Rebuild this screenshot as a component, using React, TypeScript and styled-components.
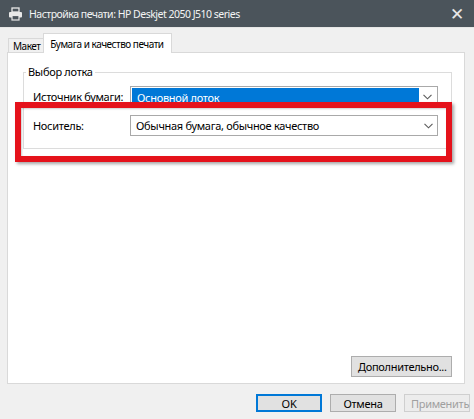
import styled, { createGlobalStyle } from 'styled-components';

const GlobalStyle = createGlobalStyle`
  *, *::before, *::after {
    box-sizing: border-box;
  }
  html, body {
    margin: 0;
    padding: 0;
    background: #f0f0f0;
  }
  body {
    font-family: "Noto Sans", "Liberation Sans", sans-serif;
    font-size: 11px;
    letter-spacing: -0.3px;
    color: #000;
  }
`

const Window = styled.div`
  position: relative;
  width: 474px;
  height: 419px;
  display: flex;
  flex-direction: column;
  background: #f0f0f0;
  overflow: hidden;
`

const TitleBar = styled.div`
  height: 28px;
  flex: none;
  display: flex;
  align-items: center;
  background: #4b545b;
  color: #f4f4f4;
  padding: 0 10px 0 8px;
  border-bottom: 1px solid #e6e6e6;
`

const Title = styled.span`
  flex: 1;
  margin-left: 6px;
  font-size: 10.5px;
  letter-spacing: -0.5px;
`

const Close = styled.span`
  font-size: 17px;
  font-weight: 300;
  line-height: 1;
  color: #e8e8e8;
`

const Body = styled.div`
  padding: 5px 9px 0 7px;
  display: flex;
  flex-direction: column;
`

const Tabs = styled.div`
  display: flex;
  align-items: flex-end;
  height: 19px;
  padding-left: 1px;
`

const Tab = styled.div<{ $active?: boolean }>`
  height: ${p => (p.$active ? '20px' : '14px')};
  display: flex;
  align-items: center;
  padding: ${p => (p.$active ? '0 7px 0 6px' : '0 3px 0 4px')};
  background: ${p => (p.$active ? '#fff' : '#f0f0f0')};
  border: 1px solid #d9d9d9;
  border-bottom: none;
  margin-left: ${p => (p.$active ? '-1px' : '0')};
  margin-bottom: ${p => (p.$active ? '-1px' : '0')};
  position: relative;
  z-index: ${p => (p.$active ? 1 : 0)};
  font-size: 10px;
  letter-spacing: -0.5px;
`

const Panel = styled.div`
  height: 332px;
  background: #fff;
  border: 1px solid #d9d9d9;
  display: flex;
  flex-direction: column;
  padding: 12px 12px 6px 15px;
`

const Group = styled.fieldset`
  margin: 0;
  padding: 7px 13px 12px 9px;
  border: 1px solid #dcdcdc;
  display: flex;
  flex-direction: column;
  gap: 8px;
  min-width: 0;
`

const Legend = styled.legend`
  padding: 0 2px;
  margin-left: -7px;
  line-height: 14px;
`

const Row = styled.div`
  display: flex;
  align-items: center;
`

const Label = styled.span`
  width: 97px;
  flex: none;
`

const Select = styled.div<{ $focused?: boolean }>`
  flex: 1;
  height: 21px;
  display: flex;
  align-items: center;
  border: 1px solid #a9a9a9;
  background: #fff;
  padding: ${p => (p.$focused ? '1px' : '0')};
`

const SelectValue = styled.div<{ $focused?: boolean }>`
  flex: 1;
  height: 100%;
  display: flex;
  align-items: center;
  padding-left: 5px;
  padding-top: ${p => (p.$focused ? '2px' : '0')};
  background: ${p => (p.$focused ? '#0078d7' : 'transparent')};
  color: ${p => (p.$focused ? '#fff' : '#000')};
`

const Arrow = styled.div`
  width: 17px;
  display: flex;
  align-items: center;
  justify-content: center;
  flex: none;
`

const Spacer = styled.div`
  flex: 1;
`

const Button = styled.button<{ $primary?: boolean; $disabled?: boolean }>`
  height: 20px;
  font-family: inherit;
  font-size: 11px;
  letter-spacing: -0.3px;
  padding: 0 6px;
  background: #e1e1e1;
  border: ${p => (p.$primary ? '2px solid #0078d7' : '1px solid #adadad')};
  color: ${p => (p.$disabled ? '#a0a0a0' : '#000')};
  ${p => p.$disabled && 'background: #ececec; border-color: #cfcfcf;'}
`

const AdvancedRow = styled.div`
  display: flex;
  justify-content: flex-end;
`

const Advanced = styled(Button)`
  width: 101px;
  height: 21px;
`

const Footer = styled.div`
  display: flex;
  justify-content: flex-end;
  gap: 8px;
  padding-top: 10px;
  margin-right: -5px;
`

const FooterButton = styled(Button)`
  width: 66px;
  height: 18px;
  line-height: 1;
`

const Highlight = styled.div`
  position: absolute;
  left: 15px;
  top: 102px;
  width: 437px;
  height: 60px;
  border: 6px solid #e5121b;
  box-shadow: 2px 2px 3px rgba(0, 0, 0, 0.35), inset 1px 1px 2px rgba(0, 0, 0, 0.2);
  pointer-events: none;
`

const PrinterIcon = () => (
  <svg width="15" height="14" viewBox="0 0 15 14">
    <rect x="4" y="1" width="7" height="4" fill="none" stroke="#e8e8e8" strokeWidth="1.3" />
    <rect x="1" y="5" width="13" height="5.5" rx="1" fill="#e8e8e8" />
    <rect x="4" y="8.5" width="7" height="4.5" fill="#4b545b" stroke="#e8e8e8" strokeWidth="1.2" />
  </svg>
)

const Chevron = () => (
  <svg width="9" height="6" viewBox="0 0 9 6">
    <path d="M0.5 0.8 L4.5 4.8 L8.5 0.8" fill="none" stroke="#5a5a5a" strokeWidth="1.1" />
  </svg>
)

export default function App() {
  return <>
    <GlobalStyle />
    <Window>
      <TitleBar>
        <PrinterIcon />
        <Title>Настройка печати: HP Deskjet 2050 J510 series</Title>
        <Close>✕</Close>
      </TitleBar>
      <Body>
        <Tabs>
          <Tab>Макет</Tab>
          <Tab $active>Бумага и качество печати</Tab>
        </Tabs>
        <Panel>
          <Group>
            <Legend>Выбор лотка</Legend>
            <Row>
              <Label>Источник бумаги:</Label>
              <Select $focused>
                <SelectValue $focused>Основной лоток</SelectValue>
                <Arrow><Chevron /></Arrow>
              </Select>
            </Row>
            <Row>
              <Label>Носитель:</Label>
              <Select>
                <SelectValue>Обычная бумага, обычное качество</SelectValue>
                <Arrow><Chevron /></Arrow>
              </Select>
            </Row>
          </Group>
          <Spacer />
          <AdvancedRow>
            <Advanced>Дополнительно...</Advanced>
          </AdvancedRow>
        </Panel>
        <Footer>
          <FooterButton $primary>OK</FooterButton>
          <FooterButton>Отмена</FooterButton>
          <FooterButton $disabled>Применить</FooterButton>
        </Footer>
      </Body>
      <Highlight />
    </Window>
  </>
}
